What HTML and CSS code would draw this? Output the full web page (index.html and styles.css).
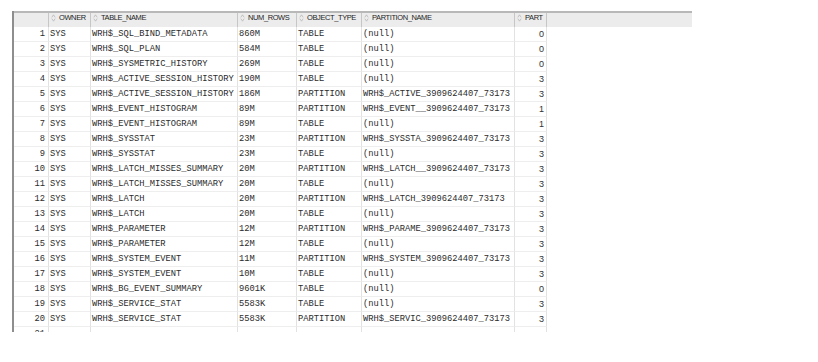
FILE: index.html
```html
<!DOCTYPE html>
<html>
<head>
<meta charset="utf-8">
<link rel="stylesheet" href="styles.css">
</head>
<body>
<div class="grid">
  <div class="head">
    <div class="hc rn"></div>
    <div class="hc"><svg class="sort" viewBox="0 0 6 10" width="6" height="10"><path d="M1 4.2 L3 1.2 L5 4.2 M1 5.8 L3 8.8 L5 5.8" fill="none" stroke="#b4b4b4" stroke-width="0.9"/></svg><span>OWNER</span></div>
    <div class="hc"><svg class="sort" viewBox="0 0 6 10" width="6" height="10"><path d="M1 4.2 L3 1.2 L5 4.2 M1 5.8 L3 8.8 L5 5.8" fill="none" stroke="#b4b4b4" stroke-width="0.9"/></svg><span>TABLE_NAME</span></div>
    <div class="hc"><svg class="sort" viewBox="0 0 6 10" width="6" height="10"><path d="M1 4.2 L3 1.2 L5 4.2 M1 5.8 L3 8.8 L5 5.8" fill="none" stroke="#b4b4b4" stroke-width="0.9"/></svg><span>NUM_ROWS</span></div>
    <div class="hc"><svg class="sort" viewBox="0 0 6 10" width="6" height="10"><path d="M1 4.2 L3 1.2 L5 4.2 M1 5.8 L3 8.8 L5 5.8" fill="none" stroke="#b4b4b4" stroke-width="0.9"/></svg><span>OBJECT_TYPE</span></div>
    <div class="hc"><svg class="sort" viewBox="0 0 6 10" width="6" height="10"><path d="M1 4.2 L3 1.2 L5 4.2 M1 5.8 L3 8.8 L5 5.8" fill="none" stroke="#b4b4b4" stroke-width="0.9"/></svg><span>PARTITION_NAME</span></div>
    <div class="hc"><svg class="sort" viewBox="0 0 6 10" width="6" height="10"><path d="M1 4.2 L3 1.2 L5 4.2 M1 5.8 L3 8.8 L5 5.8" fill="none" stroke="#b4b4b4" stroke-width="0.9"/></svg><span>PART</span></div>
    <div class="hfill"></div>
  </div>
  <div class="body">
    <div class="row"><div class="c rn">1</div><div class="c">SYS</div><div class="c">WRH$_SQL_BIND_METADATA</div><div class="c">860M</div><div class="c">TABLE</div><div class="c">(null)</div><div class="c num">0</div></div>
    <div class="row"><div class="c rn">2</div><div class="c">SYS</div><div class="c">WRH$_SQL_PLAN</div><div class="c">584M</div><div class="c">TABLE</div><div class="c">(null)</div><div class="c num">0</div></div>
    <div class="row"><div class="c rn">3</div><div class="c">SYS</div><div class="c">WRH$_SYSMETRIC_HISTORY</div><div class="c">269M</div><div class="c">TABLE</div><div class="c">(null)</div><div class="c num">0</div></div>
    <div class="row"><div class="c rn">4</div><div class="c">SYS</div><div class="c">WRH$_ACTIVE_SESSION_HISTORY</div><div class="c">190M</div><div class="c">TABLE</div><div class="c">(null)</div><div class="c num">3</div></div>
    <div class="row"><div class="c rn">5</div><div class="c">SYS</div><div class="c">WRH$_ACTIVE_SESSION_HISTORY</div><div class="c">186M</div><div class="c">PARTITION</div><div class="c">WRH$_ACTIVE_3909624407_73173</div><div class="c num">3</div></div>
    <div class="row"><div class="c rn">6</div><div class="c">SYS</div><div class="c">WRH$_EVENT_HISTOGRAM</div><div class="c">89M</div><div class="c">PARTITION</div><div class="c">WRH$_EVENT__3909624407_73173</div><div class="c num">1</div></div>
    <div class="row"><div class="c rn">7</div><div class="c">SYS</div><div class="c">WRH$_EVENT_HISTOGRAM</div><div class="c">89M</div><div class="c">TABLE</div><div class="c">(null)</div><div class="c num">1</div></div>
    <div class="row"><div class="c rn">8</div><div class="c">SYS</div><div class="c">WRH$_SYSSTAT</div><div class="c">23M</div><div class="c">PARTITION</div><div class="c">WRH$_SYSSTA_3909624407_73173</div><div class="c num">3</div></div>
    <div class="row"><div class="c rn">9</div><div class="c">SYS</div><div class="c">WRH$_SYSSTAT</div><div class="c">23M</div><div class="c">TABLE</div><div class="c">(null)</div><div class="c num">3</div></div>
    <div class="row"><div class="c rn">10</div><div class="c">SYS</div><div class="c">WRH$_LATCH_MISSES_SUMMARY</div><div class="c">20M</div><div class="c">PARTITION</div><div class="c">WRH$_LATCH__3909624407_73173</div><div class="c num">3</div></div>
    <div class="row"><div class="c rn">11</div><div class="c">SYS</div><div class="c">WRH$_LATCH_MISSES_SUMMARY</div><div class="c">20M</div><div class="c">TABLE</div><div class="c">(null)</div><div class="c num">3</div></div>
    <div class="row"><div class="c rn">12</div><div class="c">SYS</div><div class="c">WRH$_LATCH</div><div class="c">20M</div><div class="c">PARTITION</div><div class="c">WRH$_LATCH_3909624407_73173</div><div class="c num">3</div></div>
    <div class="row"><div class="c rn">13</div><div class="c">SYS</div><div class="c">WRH$_LATCH</div><div class="c">20M</div><div class="c">TABLE</div><div class="c">(null)</div><div class="c num">3</div></div>
    <div class="row"><div class="c rn">14</div><div class="c">SYS</div><div class="c">WRH$_PARAMETER</div><div class="c">12M</div><div class="c">PARTITION</div><div class="c">WRH$_PARAME_3909624407_73173</div><div class="c num">3</div></div>
    <div class="row"><div class="c rn">15</div><div class="c">SYS</div><div class="c">WRH$_PARAMETER</div><div class="c">12M</div><div class="c">TABLE</div><div class="c">(null)</div><div class="c num">3</div></div>
    <div class="row"><div class="c rn">16</div><div class="c">SYS</div><div class="c">WRH$_SYSTEM_EVENT</div><div class="c">11M</div><div class="c">PARTITION</div><div class="c">WRH$_SYSTEM_3909624407_73173</div><div class="c num">3</div></div>
    <div class="row"><div class="c rn">17</div><div class="c">SYS</div><div class="c">WRH$_SYSTEM_EVENT</div><div class="c">10M</div><div class="c">TABLE</div><div class="c">(null)</div><div class="c num">3</div></div>
    <div class="row"><div class="c rn">18</div><div class="c">SYS</div><div class="c">WRH$_BG_EVENT_SUMMARY</div><div class="c">9601K</div><div class="c">TABLE</div><div class="c">(null)</div><div class="c num">0</div></div>
    <div class="row"><div class="c rn">19</div><div class="c">SYS</div><div class="c">WRH$_SERVICE_STAT</div><div class="c">5583K</div><div class="c">TABLE</div><div class="c">(null)</div><div class="c num">3</div></div>
    <div class="row"><div class="c rn">20</div><div class="c">SYS</div><div class="c">WRH$_SERVICE_STAT</div><div class="c">5583K</div><div class="c">PARTITION</div><div class="c">WRH$_SERVIC_3909624407_73173</div><div class="c num">3</div></div>
    <div class="row"><div class="c rn">21</div><div class="c"></div><div class="c"></div><div class="c"></div><div class="c"></div><div class="c"></div><div class="c num"></div></div>
  </div>
</div>
</body>
</html>
```

FILE: styles.css
```css
html, body {
  margin: 0;
  padding: 0;
  background: #ffffff;
}

.grid {
  margin: 11px 0 0 12px;
  width: 680px;
  height: 321px;
  overflow: hidden;
  border-left: 2px solid #8e8e8e;
  box-sizing: border-box;
}

.head {
  display: grid;
  grid-template-columns: 35px 42px 147px 59px 65px 153px 32px 1fr;
  border-top: 2px solid #b8b8b8;
  background: #ececec;
  height: 16px;
  box-sizing: border-box;
}

.hc {
  display: flex;
  align-items: flex-start;
  gap: 3px;
  padding: 0 0 0 2px;
  border-right: 1px solid #c6c6c6;
  box-sizing: border-box;
  overflow: hidden;
  white-space: nowrap;
  font-family: "Liberation Sans", Arial, sans-serif;
  font-size: 7.5px;
  letter-spacing: -0.4px;
  line-height: 9px;
  color: #1e1e1e;
}

.hc .sort {
  flex: none;
  width: 5px;
  height: 10px;
}

.hfill {
  background: #ececec;
}

.row {
  display: grid;
  grid-template-columns: 35px 42px 147px 59px 65px 153px 32px;
  grid-template-rows: 15px;
  width: 533px;
  height: 15px;
}

.c {
  box-sizing: border-box;
  border-right: 1px solid #e2e2e2;
  border-bottom: 1px solid #eeeeee;
  padding: 1px 0 0 1px;
  font-family: "Liberation Mono", "Courier New", monospace;
  font-size: 8.75px;
  line-height: 13px;
  color: #2c2c2c;
  white-space: nowrap;
  overflow: hidden;
}

.c.rn {
  text-align: right;
  padding: 1px 3px 0 0;
}

.c.num {
  text-align: right;
  padding: 1px 2px 0 0;
  font-family: "Liberation Sans", Arial, sans-serif;
  font-size: 9px;
  color: #333333;
}
```
